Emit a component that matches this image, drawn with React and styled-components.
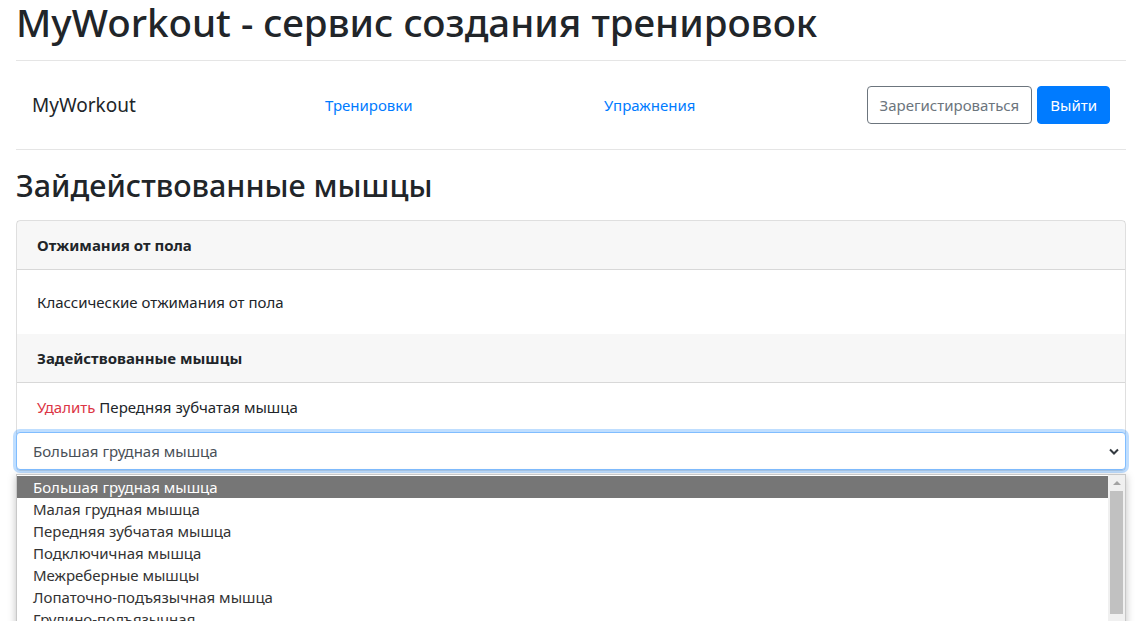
import React from 'react'
import styled, { createGlobalStyle } from 'styled-components'

const GlobalStyle = createGlobalStyle`
  body {
    margin: 0;
    background: #fff;
    font-family: "Noto Sans", "Open Sans", sans-serif;
    font-size: 15px;
    line-height: 1.5;
    color: #212529;
    overflow: hidden;
  }
`

const Page = styled.div`
  width: 1110px;
  padding: 0 16px;
  height: 621px;
  overflow: hidden;
`

const Title = styled.h1`
  margin: 0;
  font-size: 38.5px;
  font-weight: 500;
  line-height: 44px;
`

const Rule = styled.hr`
  margin: 16px 0;
  border: 0;
  border-top: 1px solid rgba(0, 0, 0, 0.1);
`

const Navbar = styled.nav`
  display: flex;
  align-items: center;
  padding: 9px 16px;
`

const NavItem = styled.div`
  width: ${p => p.width}px;
  flex: none;
`

const Brand = styled.span`
  font-size: 19px;
  line-height: 30px;
`

const NavLink = styled.a`
  color: #007bff;
  text-decoration: none;
  font-size: 15px;
`

const Buttons = styled.div`
  display: flex;
  gap: 5px;
  margin-left: auto;
`

const Button = styled.button`
  font-family: inherit;
  font-size: 15px;
  line-height: 24px;
  padding: 6px 12px;
  border-radius: 4px;
  border: 1px solid ${p => (p.primary ? '#007bff' : '#6c757d')};
  background: ${p => (p.primary ? '#007bff' : '#fff')};
  color: ${p => (p.primary ? '#fff' : '#6c757d')};
`

const Heading = styled.h2`
  margin: 1px 0 16px;
  font-size: 30.5px;
  font-weight: 500;
  line-height: 38px;
`

const Card = styled.div`
  position: relative;
  border: 1px solid rgba(0, 0, 0, 0.125);
  border-radius: 4px;
`

const CardHeader = styled.div`
  padding: 12px 20px;
  background: rgba(0, 0, 0, 0.03);
  border-bottom: 1px solid rgba(0, 0, 0, 0.125);
  font-weight: 700;
  font-size: 15px;
  line-height: 24px;
`

const CardBody = styled.div`
  padding: 20px;
  line-height: 24px;
`

const ListItem = styled.div`
  padding: 12px 20px 13px;
  line-height: 24px;
`

const Danger = styled.a`
  color: #dc3545;
  text-decoration: none;
`

const SelectWrap = styled.div`
  position: relative;
  margin: 0 -1px;
`

const Select = styled.div`
  position: relative;
  height: 36px;
  display: flex;
  align-items: center;
  padding: 0 16px;
  border: 1px solid #80bdff;
  border-radius: 4px;
  box-shadow: 0 0 0 3px rgba(0, 123, 255, 0.25);
  color: #495057;
  background: #fff;
`

const Chevron = styled.svg`
  position: absolute;
  right: 6px;
  top: 15px;
`

const Dropdown = styled.div`
  position: absolute;
  left: 0;
  right: 0;
  top: calc(100% + 4px);
  height: 200px;
  background: #fff;
  border: 1px solid #c8c8c8;
  box-shadow: 0 2px 8px rgba(0, 0, 0, 0.25);
  display: flex;
`

const Options = styled.div`
  flex: 1;
  padding-top: 1px;
`

const Option = styled.div`
  height: 22px;
  line-height: 22px;
  padding-left: 16px;
  color: ${p => (p.active ? '#fff' : '#333')};
  background: ${p => (p.active ? '#767676' : 'transparent')};
`

const Scrollbar = styled.div`
  width: 17px;
  background: #f0f0f0;
  display: flex;
  flex-direction: column;
  align-items: center;
`

const Arrow = styled.div`
  margin: 6px 0;
  width: 0;
  height: 0;
  border-left: 4px solid transparent;
  border-right: 4px solid transparent;
  border-bottom: 4px solid #a3a3a3;
`

const Thumb = styled.div`
  width: 13px;
  height: 123px;
  background: #c1c1c1;
`

const muscles = [
  'Большая грудная мышца',
  'Малая грудная мышца',
  'Передняя зубчатая мышца',
  'Подключичная мышца',
  'Межреберные мышцы',
  'Лопаточно-подъязычная мышца',
  'Грудино-подъязычная',
  'Дельтовидная мышца',
]

const App = () => {
  return (
    <Page>
      <GlobalStyle />
      <Title>MyWorkout - сервис создания тренировок</Title>
      <Rule />
      <Navbar>
        <NavItem width={293}>
          <Brand>MyWorkout</Brand>
        </NavItem>
        <NavItem width={279}>
          <NavLink href="#">Тренировки</NavLink>
        </NavItem>
        <NavLink href="#">Упражнения</NavLink>
        <Buttons>
          <Button>Зарегистироваться</Button>
          <Button primary>Выйти</Button>
        </Buttons>
      </Navbar>
      <Rule />
      <Heading>Зайдействованные мышцы</Heading>
      <Card>
        <CardHeader>Отжимания от пола</CardHeader>
        <CardBody>Классические отжимания от пола</CardBody>
        <CardHeader>Задействованные мышцы</CardHeader>
        <ListItem>
          <Danger href="#">Удалить</Danger> Передняя зубчатая мышца
        </ListItem>
        <SelectWrap>
          <Select>
            Большая грудная мышца
            <Chevron width="10" height="7" viewBox="0 0 10 7">
              <path d="M1 1.5l4 4 4-4" fill="none" stroke="#343a40" strokeWidth="2" />
            </Chevron>
          </Select>
          <Dropdown>
            <Options>
              {muscles.map((m, i) => (
                <Option key={m} active={i === 0}>{m}</Option>
              ))}
            </Options>
            <Scrollbar>
              <Arrow />
              <Thumb />
            </Scrollbar>
          </Dropdown>
        </SelectWrap>
      </Card>
    </Page>
  )
}

export default App
